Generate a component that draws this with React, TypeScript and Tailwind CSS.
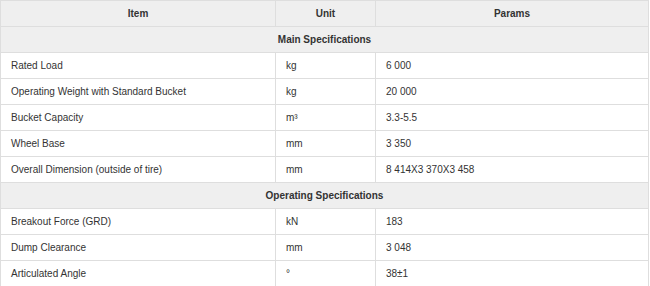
import { Fragment } from "react"

const sections = [
  {
    title: "Main Specifications",
    rows: [
      ["Rated Load", "kg", "6 000"],
      ["Operating Weight with Standard Bucket", "kg", "20 000"],
      ["Bucket Capacity", "m³", "3.3-5.5"],
      ["Wheel Base", "mm", "3 350"],
      ["Overall Dimension (outside of tire)", "mm", "8 414X3 370X3 458"],
    ],
  },
  {
    title: "Operating Specifications",
    rows: [
      ["Breakout Force (GRD)", "kN", "183"],
      ["Dump Clearance", "mm", "3 048"],
      ["Articulated Angle", "°", "38±1"],
    ],
  },
]

export default function App() {
  return (
    <div className="w-[650px] h-[286px] bg-white font-['Liberation_Sans',Arial,sans-serif] text-[10px] text-[#333]">
      <table className="w-[649px] border-collapse table-fixed">
        <colgroup>
          <col className="w-[275px]" />
          <col className="w-[100px]" />
          <col />
        </colgroup>
        <thead>
          <tr className="h-[26px] bg-[#efefef]">
            <th className="border border-[#dedede] font-bold text-center">Item</th>
            <th className="border border-[#dedede] font-bold text-center">Unit</th>
            <th className="border border-[#dedede] font-bold text-center">Params</th>
          </tr>
        </thead>
        <tbody>
          {sections.map((section) => (
            <Fragment key={section.title}>
              <tr className="h-[26px] bg-[#efefef]">
                <td colSpan={3} className="border border-[#dedede] font-bold text-center">
                  {section.title}
                </td>
              </tr>
              {section.rows.map((row, i) => (
                <tr key={i} className="h-[26px] bg-white">
                  {row.map((cell, j) => (
                    <td key={j} className="border border-[#dedede] px-[10px]">
                      {cell}
                    </td>
                  ))}
                </tr>
              ))}
            </Fragment>
          ))}
        </tbody>
      </table>
    </div>
  )
}
